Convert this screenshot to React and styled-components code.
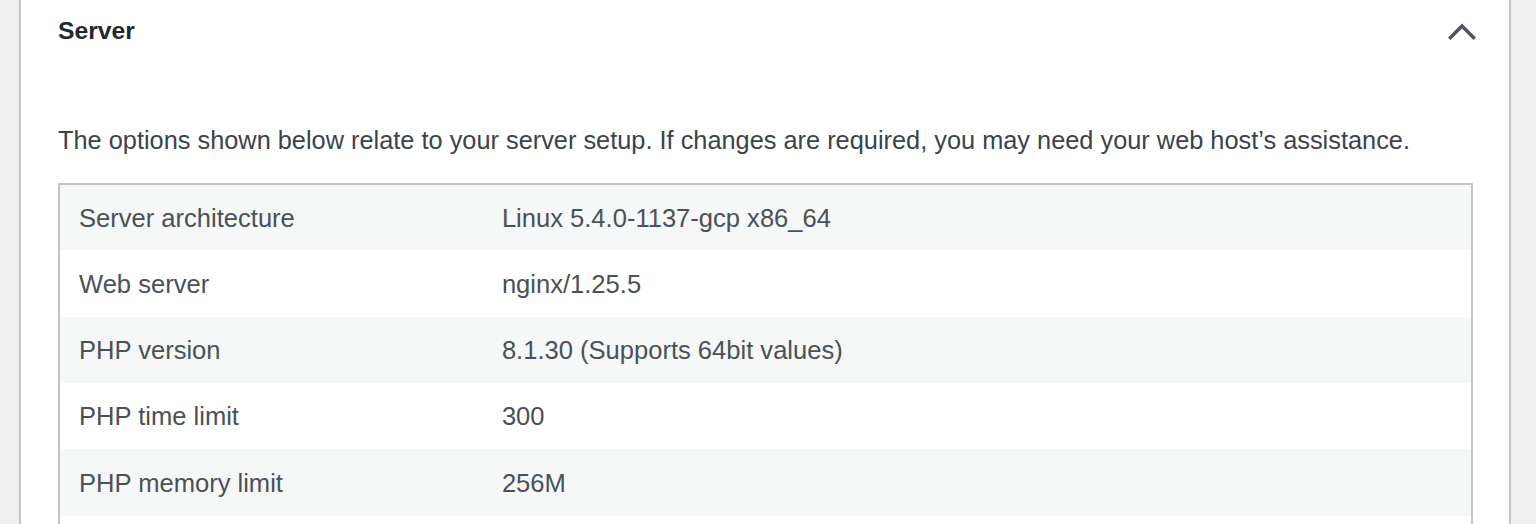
import React from "react";
import styled, { createGlobalStyle } from "styled-components";

const Global = createGlobalStyle`
  html, body { margin: 0; padding: 0; }
  body {
    background: #f0f0f1;
    font-family: "Liberation Sans", Arial, sans-serif;
    color: #3c434a;
    overflow: hidden;
  }
`;

const Page = styled.div`
  padding: 0 25px 0 19px;
  height: 524px;
  box-sizing: border-box;
`;

const Panel = styled.section`
  background: #fff;
  border-left: 2px solid #c3c4c7;
  border-right: 2px solid #c3c4c7;
  height: 100%;
  box-sizing: border-box;
  overflow: hidden;
`;

const Header = styled.div`
  display: flex;
  align-items: center;
  justify-content: space-between;
  height: 62px;
  padding: 0 33px 0 37px;
`;

const Title = styled.h3`
  margin: 0;
  font-size: 24.7px;
  font-weight: 700;
  color: #23282d;
  line-height: 62px;
`;

const Chevron = styled.svg`
  width: 28px;
  height: 18px;
  display: block;
`;

const Body = styled.div`
  padding: 59px 36px 0 37px;
`;

const Intro = styled.p`
  margin: 0 0 23px;
  font-size: 25.35px;
  line-height: 39px;
  color: #3c434a;
`;

const Table = styled.table`
  width: 100%;
  border-collapse: collapse;
  border: 2px solid #c3c4c7;
  font-size: 25.55px;
`;

const Row = styled.tr`
  background: ${(p) => (p.$striped ? "#f6f7f7" : "#fff")};
  height: ${(p) => p.$h}px;
`;

const Cell = styled.td`
  padding: 0 19px;
  vertical-align: middle;
  color: #4a5157;
  width: ${(p) => (p.$label ? "30%" : "auto")};
  line-height: 36px;
  white-space: nowrap;
`;

const rows = [
  ["Server architecture", "Linux 5.4.0-1137-gcp x86_64", 66],
  ["Web server", "nginx/1.25.5", 67],
  ["PHP version", "8.1.30 (Supports 64bit values)", 66],
  ["PHP time limit", "300", 66],
  ["PHP memory limit", "256M", 67],
  ["", "", 66],
];

export default function App() {
  return (
    <>
      <Global />
      <Page>
        <Panel>
          <Header>
            <Title>Server</Title>
            <Chevron viewBox="0 0 28 18" aria-hidden="true">
              <path
                d="M2.5 15.5 L14 4 L25.5 15.5"
                fill="none"
                stroke="#50575e"
                strokeWidth="3.6"
                strokeLinecap="square"
              />
            </Chevron>
          </Header>
          <Body>
            <Intro>
              The options shown below relate to your server setup. If changes are required, you may need your web host’s assistance.
            </Intro>
            <Table>
              <tbody>
                {rows.map(([k, v, h], i) => (
                  <Row key={i} $striped={i % 2 === 0} $h={h}>
                    <Cell $label>{k}</Cell>
                    <Cell>{v}</Cell>
                  </Row>
                ))}
              </tbody>
            </Table>
          </Body>
        </Panel>
      </Page>
    </>
  );
}
